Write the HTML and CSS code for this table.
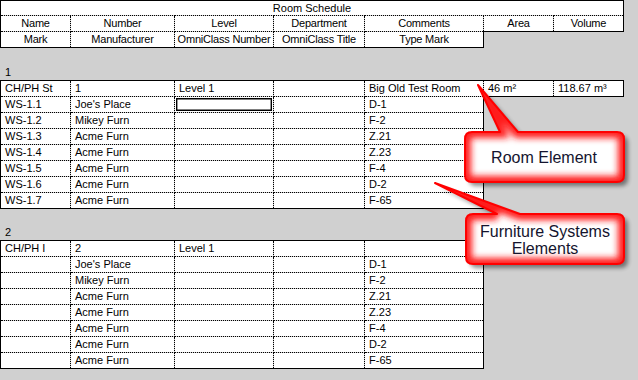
FILE: index.html
```html
<!DOCTYPE html>
<html>
<head>
<meta charset="utf-8">
<link rel="stylesheet" href="styles.css">
</head>
<body>
<div class="page">
  <table class="sched head">
    <colgroup>
      <col class="c1"><col class="c2"><col class="c3"><col class="c4"><col class="c5"><col class="c6"><col class="c7">
    </colgroup>
    <tr><td colspan="7" class="title r">Room Schedule</td></tr>
    <tr class="hdr">
      <td>Name</td><td>Number</td><td>Level</td><td>Department</td><td>Comments</td><td class="b">Area</td><td class="b r">Volume</td>
    </tr>
    <tr class="hdr">
      <td class="b">Mark</td><td class="b">Manufacturer</td><td class="b">OmniClass Number</td><td class="b">OmniClass Title</td><td class="b r">Type Mark</td><td class="void"></td><td class="void"></td>
    </tr>
  </table>

  <div class="group-label">1</div>
  <table class="sched grp">
    <colgroup>
      <col class="c1"><col class="c2"><col class="c3"><col class="c4"><col class="c5"><col class="c6"><col class="c7">
    </colgroup>
    <tr><td>CH/PH St</td><td>1</td><td>Level 1</td><td></td><td>Big Old Test Room</td><td class="b">46 m²</td><td class="b r">118.67 m³</td></tr>
    <tr><td>WS-1.1</td><td>Joe's Place</td><td><div class="sel"></div></td><td></td><td class="r">D-1</td><td class="void"></td><td class="void"></td></tr>
    <tr><td>WS-1.2</td><td>Mikey Furn</td><td></td><td></td><td class="r">F-2</td><td class="void"></td><td class="void"></td></tr>
    <tr><td>WS-1.3</td><td>Acme Furn</td><td></td><td></td><td class="r">Z.21</td><td class="void"></td><td class="void"></td></tr>
    <tr><td>WS-1.4</td><td>Acme Furn</td><td></td><td></td><td class="r">Z.23</td><td class="void"></td><td class="void"></td></tr>
    <tr><td>WS-1.5</td><td>Acme Furn</td><td></td><td></td><td class="r">F-4</td><td class="void"></td><td class="void"></td></tr>
    <tr><td>WS-1.6</td><td>Acme Furn</td><td></td><td></td><td class="r">D-2</td><td class="void"></td><td class="void"></td></tr>
    <tr><td class="b">WS-1.7</td><td class="b">Acme Furn</td><td class="b"></td><td class="b"></td><td class="b r">F-65</td><td class="void"></td><td class="void"></td></tr>
  </table>

  <div class="group-label second">2</div>
  <table class="sched grp narrow">
    <colgroup>
      <col class="c1"><col class="c2"><col class="c3"><col class="c4"><col class="c5">
    </colgroup>
    <tr><td>CH/PH I</td><td>2</td><td>Level 1</td><td></td><td></td></tr>
    <tr><td></td><td>Joe's Place</td><td></td><td></td><td>D-1</td></tr>
    <tr><td></td><td>Mikey Furn</td><td></td><td></td><td>F-2</td></tr>
    <tr><td></td><td>Acme Furn</td><td></td><td></td><td>Z.21</td></tr>
    <tr><td></td><td>Acme Furn</td><td></td><td></td><td>Z.23</td></tr>
    <tr><td></td><td>Acme Furn</td><td></td><td></td><td>F-4</td></tr>
    <tr><td></td><td>Acme Furn</td><td></td><td></td><td>D-2</td></tr>
    <tr><td></td><td>Acme Furn</td><td></td><td></td><td>F-65</td></tr>
  </table>

  <svg class="callouts" width="638" height="380" viewBox="0 0 638 380">
    <defs>
      <filter id="shadow" x="-20%" y="-20%" width="140%" height="140%">
        <feGaussianBlur stdDeviation="2"/>
      </filter>
      <filter id="glow" x="-20%" y="-20%" width="140%" height="140%">
        <feGaussianBlur stdDeviation="3"/>
      </filter>
      <clipPath id="clip1">
        <path d="M472,132 H500 L478,85 L518,132 H617 Q624,132 624,139 V175 Q624,182 617,182 H472 Q465,182 465,175 V139 Q465,132 472,132 Z"/>
      </clipPath>
      <clipPath id="clip2">
        <path d="M473,214 H497 L435,183 L520,214 H617 Q624,214 624,221 V257 Q624,264 617,264 H473 Q466,264 466,257 V221 Q466,214 473,214 Z"/>
      </clipPath>
    </defs>
    <g class="callout">
      <path class="shade" transform="translate(4,4)" filter="url(#shadow)" d="M472,132 H500 L478,85 L518,132 H617 Q624,132 624,139 V175 Q624,182 617,182 H472 Q465,182 465,175 V139 Q465,132 472,132 Z"/>
      <path class="face" d="M472,132 H500 L478,85 L518,132 H617 Q624,132 624,139 V175 Q624,182 617,182 H472 Q465,182 465,175 V139 Q465,132 472,132 Z"/>
      <path class="glow" filter="url(#glow)" clip-path="url(#clip1)" d="M472,132 H500 L478,85 L518,132 H617 Q624,132 624,139 V175 Q624,182 617,182 H472 Q465,182 465,175 V139 Q465,132 472,132 Z"/>
      <path class="edge" d="M472,132 H500 L478,85 L518,132 H617 Q624,132 624,139 V175 Q624,182 617,182 H472 Q465,182 465,175 V139 Q465,132 472,132 Z"/>
      <text class="label" x="544" y="163">Room Element</text>
    </g>
    <g class="callout">
      <path class="shade" transform="translate(4,4)" filter="url(#shadow)" d="M473,214 H497 L435,183 L520,214 H617 Q624,214 624,221 V257 Q624,264 617,264 H473 Q466,264 466,257 V221 Q466,214 473,214 Z"/>
      <path class="face" d="M473,214 H497 L435,183 L520,214 H617 Q624,214 624,221 V257 Q624,264 617,264 H473 Q466,264 466,257 V221 Q466,214 473,214 Z"/>
      <path class="glow" filter="url(#glow)" clip-path="url(#clip2)" d="M473,214 H497 L435,183 L520,214 H617 Q624,214 624,221 V257 Q624,264 617,264 H473 Q466,264 466,257 V221 Q466,214 473,214 Z"/>
      <path class="edge" d="M473,214 H497 L435,183 L520,214 H617 Q624,214 624,221 V257 Q624,264 617,264 H473 Q466,264 466,257 V221 Q466,214 473,214 Z"/>
      <text class="label" x="545" y="237">Furniture Systems</text>
      <text class="label" x="545" y="254">Elements</text>
    </g>
  </svg>
</div>
</body>
</html>
```

FILE: styles.css
```css
html, body {
  margin: 0;
  padding: 0;
  background: #d0d0d0;
}

.page {
  position: relative;
  width: 638px;
  height: 380px;
  overflow: hidden;
  font-family: "Liberation Sans", Arial, sans-serif;
  font-size: 11px;
  color: #000;
}

.sched {
  border-collapse: collapse;
  table-layout: fixed;
  width: 623px;
  border-left: 1px solid #000;
  border-top: 1px solid #000;
}

.sched.narrow {
  width: 483px;
  border: 1px solid #000;
}

.c1 { width: 70px; }
.c2 { width: 104px; }
.c3 { width: 99px; }
.c4 { width: 91px; }
.c5 { width: 119px; }
.c6 { width: 70px; }
.c7 { width: 70px; }

.sched td {
  border: 1px dotted #000;
  background: #fff;
  height: 15px;
  padding: 0 4px;
  line-height: 15px;
  white-space: nowrap;
  overflow: hidden;
  vertical-align: middle;
}

.sched td.title {
  height: 14px;
  line-height: 14px;
}

.sched td.r { border-right: 1px solid #000; }
.sched td.b { border-bottom: 1px solid #000; }

.sched td.void {
  border: none;
  background: transparent;
}

.sched .title,
.sched .hdr td {
  text-align: center;
}

.sched .hdr td {
  padding: 0;
  letter-spacing: -0.2px;
}

.sched td .sel {
  height: 13px;
  margin: 0 -3px;
  box-shadow: inset 0 0 0 1px #000, inset 0 0 0 1.4px #000;
}

.group-label {
  height: 32px;
  display: flex;
  align-items: flex-end;
  padding-left: 5px;
  line-height: 16px;
}

.group-label.second {
  height: 31px;
}

.callouts {
  position: absolute;
  left: 0;
  top: 0;
  pointer-events: none;
}

.callout .shade { fill: #000; opacity: 0.45; }
.callout .face { fill: #fff; }
.callout .glow { fill: none; stroke: #ff1a1a; stroke-width: 12; }
.callout .edge { fill: none; stroke: #ff0000; stroke-width: 2; stroke-linejoin: round; }
.callout .label {
  font-family: "Liberation Sans", Arial, sans-serif;
  font-size: 16px;
  fill: #14142e;
  text-anchor: middle;
}
```
